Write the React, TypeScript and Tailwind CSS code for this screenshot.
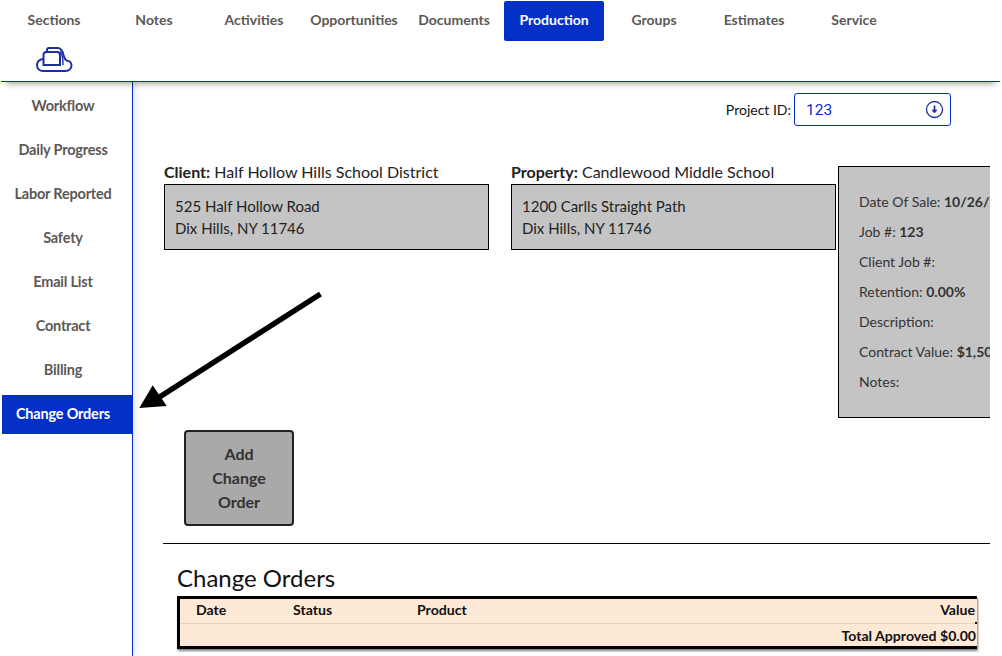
import React from "react";

const tabs = ["Sections", "Notes", "Activities", "Opportunities", "Documents", "Production", "Groups", "Estimates", "Service"];
const side = ["Workflow", "Daily Progress", "Labor Reported", "Safety", "Email List", "Contract", "Billing", "Change Orders"];
const facts: [string, string][] = [
  ["Date Of Sale:", "10/26/2017"],
  ["Job #:", "123"],
  ["Client Job #:", ""],
  ["Retention:", "0.00%"],
  ["Description:", ""],
  ["Contract Value:", "$1,500.00"],
  ["Notes:", ""],
];

function Address({ label, name, line1 }: { label: string; name: string; line1: string }) {
  return (
    <div className="w-[325px] shrink-0">
      <div className="h-[18px] text-[16px] leading-[12px] text-[#222] whitespace-nowrap">
        <b className="font-bold">{label}</b> {name}
      </div>
      <div className="h-[66px] border border-black bg-[#c4c4c4] pl-[10px] pt-[10px] text-[15px] leading-[22px] text-[#222]">
        <div>{line1}</div>
        <div>Dix Hills, NY 11746</div>
      </div>
    </div>
  );
}

export default function App() {
  return (
    <div className="relative h-[656px] w-[1002px] overflow-hidden bg-white font-['Lato','Noto_Sans',sans-serif]">
      <header className="relative z-10 mx-[1px] h-[82px] w-[999px] border-b border-[#0530c8] bg-white pl-[3px] pt-[1px] shadow-[0_7px_6px_-5px_rgba(0,0,0,0.35)]">
        <nav className="flex">
          {tabs.map((t) => (
            <div
              key={t}
              className={
                "flex h-[40px] w-[100px] items-center justify-center rounded-[2px] pb-[3px] text-[14px] font-bold " +
                (t === "Production" ? "bg-[#0530c8] text-white" : "text-[#5c5856]")
              }
            >
              {t}
            </div>
          ))}
        </nav>
        <svg className="ml-[32px] mt-[6px]" width="37" height="26" viewBox="0 0 37 26" fill="none" stroke="#1c2fa0" strokeWidth="2">
          <path d="M7.5 12 C3 12.5 1 15 1 18 C1 21.5 3.5 24 7 24 H29.5 C33 24 35.5 21.5 35.5 18.5 C35.5 15.5 33 13.5 30 13.5" />
          <path d="M11 5 V3 C11 1.5 12 1 13 1 H22 C25 1 27 5 27.5 8 C28 10 29 12 30 13.5" />
          <path d="M24 4.5 C26 6 27 10 27 18" strokeWidth="1.4" />
          <path d="M7.5 8 C7.5 6 9 5 10.5 5 H21 C23 5 24 6 24 8 V18 H7.5 Z" />
        </svg>
      </header>

      <div className="flex h-[574px]">
        <aside className="w-[133px] shrink-0 border-r border-[#0530c8] pl-[2px] pt-[5px] shadow-[2px_0_6px_rgba(0,0,0,0.12)]">
          {side.map((s) => (
            <div
              key={s}
              className={
                "flex h-[39px] mb-[5px] items-center justify-center pr-[8px] pb-[1px] text-[14.5px] font-bold tracking-[-0.2px] " +
                (s === "Change Orders" ? "bg-[#0530c8] text-white" : "text-[#5c5856]")
              }
            >
              {s}
            </div>
          ))}
        </aside>

        <main className="w-[857px] shrink-0 overflow-hidden">
          <div className="mt-[11px] flex h-[33px] items-center justify-end pr-[39px]">
            <span className="mr-[3px] text-[14px] text-[#111]">Project ID:</span>
            <div className="flex h-[33px] w-[157px] items-center justify-between rounded-[3px] border border-[#0530c8] pl-[11px] pr-[6px] text-[15.5px] text-[#0530c8]">
              <span className="pt-[2px] font-['Roboto',sans-serif]">123</span>
              <svg width="19" height="19" viewBox="0 0 19 19" fill="none" stroke="#1c2fa0">
                <circle cx="9.5" cy="9.5" r="8" strokeWidth="1.3" />
                <path d="M9.5 5.5 V12" strokeWidth="1.7" />
                <path d="M7 10 L9.5 13 L12 10 Z" fill="#1c2fa0" strokeWidth="0.7" />
              </svg>
            </div>
          </div>

          <div className="mt-[40px] flex h-[252px] pl-[31px]">
            <Address label="Client:" name="Half Hollow Hills School District" line1="525 Half Hollow Road" />
            <div className="ml-[22px]">
              <Address label="Property:" name="Candlewood Middle School" line1="1200 Carlls Straight Path" />
            </div>
            <div className="ml-[2px] h-[252px] w-[220px] shrink-0 border border-black bg-[#c4c4c4] pl-[20px] pt-[20px] text-[14px] leading-[30px] whitespace-nowrap text-[#333]">
              {facts.map(([k, v]) => (
                <div key={k}>
                  {k} {v && <b className="font-bold">{v}</b>}
                </div>
              ))}
            </div>
          </div>

          <div className="ml-[51px] mt-[12px] flex h-[96px] w-[110px] items-center justify-center rounded-[4px] border-2 border-[#222] bg-[#a9a9a9] text-center text-[16px] font-bold leading-[24px] text-[#333]">
            Add
            <br />
            Change
            <br />
            Order
          </div>

          <div className="ml-[30px] mt-[17px] h-px bg-black" />

          <h2 className="ml-[44px] mt-[18px] h-[34px] text-[24px] leading-[32px] text-[#111]">Change Orders</h2>

          <div className="relative ml-[44px] h-[53px] w-[800px] border-y-[3px] border-l-[3px] border-black bg-[#fee8d6] text-[14.1px] font-bold text-[#111] shadow-[1px_2px_2px_rgba(0,0,0,0.5)]">
            <div className="flex h-[25px] items-center border-b border-[#e0d2c6] pr-[2px] pb-[2px]">
              <span className="ml-[16px] w-[97px]">Date</span>
              <span className="w-[124px]">Status</span>
              <span className="flex-1">Product</span>
              <span>Value</span>
            </div>
            <div className="flex h-[22px] items-center justify-end pr-[1px] pt-[2px]">Total Approved $0.00</div>
            <div className="absolute right-0 top-[23px] size-[2px] bg-black" />
          </div>
        </main>
      </div>

      <svg className="absolute left-[138px] top-[290px]" width="185" height="122" viewBox="0 0 185 122" fill="none">
        <path d="M182.5 4 L20 108" stroke="#000" strokeWidth="5.5" />
        <path d="M1.3 118 L14.7 95.3 L28.7 116 Z" fill="#000" />
      </svg>
    </div>
  );
}
